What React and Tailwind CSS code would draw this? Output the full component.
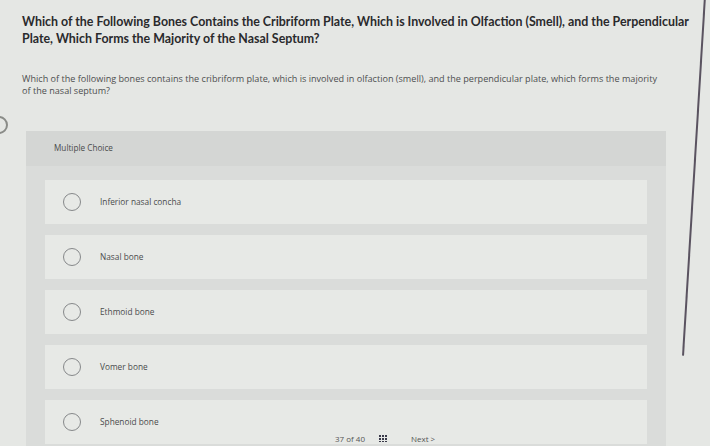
import React from 'react'

const options = ['Inferior nasal concha', 'Nasal bone', 'Ethmoid bone', 'Vomer bone', 'Sphenoid bone']

export default function App() {
  return (
    <div className="relative h-[446px] w-[710px] overflow-hidden bg-[#e5e7e4]" style={{ fontFamily: '"Open Sans", sans-serif' }}>
      {/* scrollbar line */}
      <div className="absolute left-[693px] top-[-4px] h-[360px] w-[2px] rotate-[3.5deg] bg-[#5a5360]" />
      {/* left edge circle */}
      <div className="absolute left-[-10px] top-[116px] h-[18px] w-[18px] rounded-full border-2 border-[#8a8c88] bg-[#e5e7e4]" />

      <div className="px-[22px] pt-[13px]">
        <h1 className="w-[684px] text-[12.4px] font-bold leading-[17px] text-[#2a2a2c]" style={{ fontFamily: 'Lato, "Open Sans", sans-serif' }}>
          Which of the Following Bones Contains the Cribriform Plate, Which is Involved in Olfaction (Smell), and the Perpendicular Plate, Which Forms the Majority of the Nasal Septum?
        </h1>
        <p className="mt-[26px] w-[636px] text-[9.1px] leading-[12px] text-[#4e4f50]">
          Which of the following bones contains the cribriform plate, which is involved in olfaction (smell), and the perpendicular plate, which forms the majority of the nasal septum?
        </p>
      </div>

      <div className="ml-[26px] mt-[34px] w-[640px] bg-[#dadcda] pb-[10px]">
        <div className="bg-[#d4d6d4] px-[28px] pb-[12px] pt-[11px] text-[8.2px] text-[#4a4b4c]">Multiple Choice</div>
        <div className="flex flex-col gap-[11px] px-[19px] pt-[14px]">
          {options.map((o) => (
            <div key={o} className="flex h-[44px] items-center gap-[19px] bg-[#e7e9e6] pl-[18px]">
              <span className="h-[18px] w-[18px] shrink-0 rounded-full border-[1.5px] border-[#86888a]" />
              <span className="text-[8.3px] text-[#4a4b4c]">{o}</span>
            </div>
          ))}
        </div>
      </div>

      <div className="absolute left-[335px] top-[433px] flex items-center gap-[14px] text-[8px] leading-[11px] text-[#555]">
        <span>37 of 40</span>
        <svg width="8" height="7" viewBox="0 0 8 7" fill="#3a3a4a">
          <rect x="0" y="0" width="2" height="2" /><rect x="3" y="0" width="2" height="2" /><rect x="6" y="0" width="2" height="2" />
          <rect x="0" y="3" width="2" height="2" /><rect x="3" y="3" width="2" height="2" /><rect x="6" y="3" width="2" height="2" />
          <rect x="0" y="6" width="2" height="1" /><rect x="3" y="6" width="2" height="1" /><rect x="6" y="6" width="2" height="1" />
        </svg>
        <span className="ml-[10px]">Next &gt;</span>
      </div>
    </div>
  )
}
